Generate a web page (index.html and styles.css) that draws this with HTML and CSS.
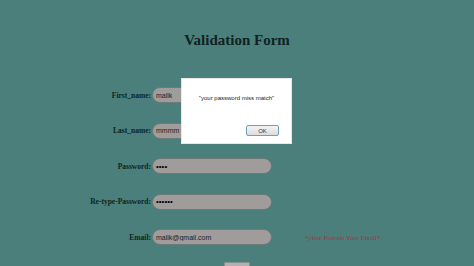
FILE: index.html
```html
<!DOCTYPE html>
<html>
<head>
<meta charset="utf-8">
<link rel="stylesheet" href="styles.css">
</head>
<body>
<div class="page">
  <h1 class="title">Validation Form</h1>
  <form class="form">
    <div class="row"><label class="lbl">First_name:</label><input class="inp" type="text" value="malik"></div>
    <div class="row"><label class="lbl">Last_name:</label><input class="inp" type="text" value="mmmm"></div>
    <div class="row"><label class="lbl">Password:</label><input class="inp pw" type="text" value="••••"></div>
    <div class="row"><label class="lbl">Re-type-Password:</label><input class="inp pw" type="text" value="••••••"></div>
    <div class="row"><label class="lbl">Email:</label><input class="inp" type="text" value="malik@gmail.com"><span class="err">*plese Provide Your Email*</span></div>
    <div class="btnrow"><button class="submit" type="button">Submit</button></div>
  </form>
</div>
<div class="dialog">
  <p class="msg">"your password miss match"</p>
  <div class="actions"><button class="ok" type="button">OK</button></div>
</div>
</body>
</html>
```
FILE: styles.css
```css
html, body {
  margin: 0;
  padding: 0;
  background: #4a7f7b;
  width: 474px;
  height: 266px;
  overflow: hidden;
}
.page {
  font-family: "Liberation Serif", serif;
  height: 266px;
  overflow: hidden;
}
.title {
  margin: 0;
  padding-top: 31px;
  text-align: center;
  font-size: 15px;
  line-height: 18px;
  font-weight: bold;
  color: #102222;
}
.form {
  margin-top: 38px;
  display: flex;
  flex-direction: column;
  gap: 19.5px;
}
.row {
  display: flex;
  align-items: center;
  height: 16px;
}
.lbl {
  width: 151px;
  text-align: right;
  font-size: 7.5px;
  font-weight: bold;
  color: #0f2424;
  padding-right: 1px;
}
.inp {
  box-sizing: border-box;
  width: 120px;
  height: 16px;
  margin: 0;
  padding: 0 3px;
  border: 1px solid #6c7a78;
  border-radius: 8px;
  background: #a09c9c;
  font-family: "Liberation Sans", sans-serif;
  font-size: 7px;
  color: #222;
  outline: none;
}
.inp.pw {
  font-size: 8px;
  color: #000;
}
.err {
  margin-left: 33px;
  font-size: 6.7px;
  color: #a8343c;
}
.btnrow {
  display: flex;
  padding-left: 224px;
  margin-top: -2.5px;
}
.submit {
  width: 26px;
  height: 14px;
  border: 1px solid #8a8e8e;
  background: #aeb2b2;
  border-radius: 1px;
  padding: 2px 0 0;
  font-family: "Liberation Sans", sans-serif;
  font-size: 6px;
  color: #333;
  line-height: 8px;
  vertical-align: top;
}
.dialog {
  position: absolute;
  left: 181px;
  top: 78px;
  width: 111px;
  height: 66px;
  background: #ffffff;
  font-family: "Liberation Sans", sans-serif;
  box-sizing: border-box;
  border: 1px solid #e8e8e8;
}
.msg {
  margin: 16px 0 0;
  text-align: center;
  font-size: 6px;
  color: #222;
}
.actions {
  display: flex;
  justify-content: flex-end;
  padding-right: 12px;
  margin-top: 24px;
}
.ok {
  width: 33px;
  height: 11px;
  padding: 0;
  font-family: "Liberation Sans", sans-serif;
  font-size: 6px;
  color: #333;
  background: linear-gradient(#f4f4f4, #dcdcdc);
  border: 1px solid #6f9fc0;
  border-radius: 2px;
}
```
